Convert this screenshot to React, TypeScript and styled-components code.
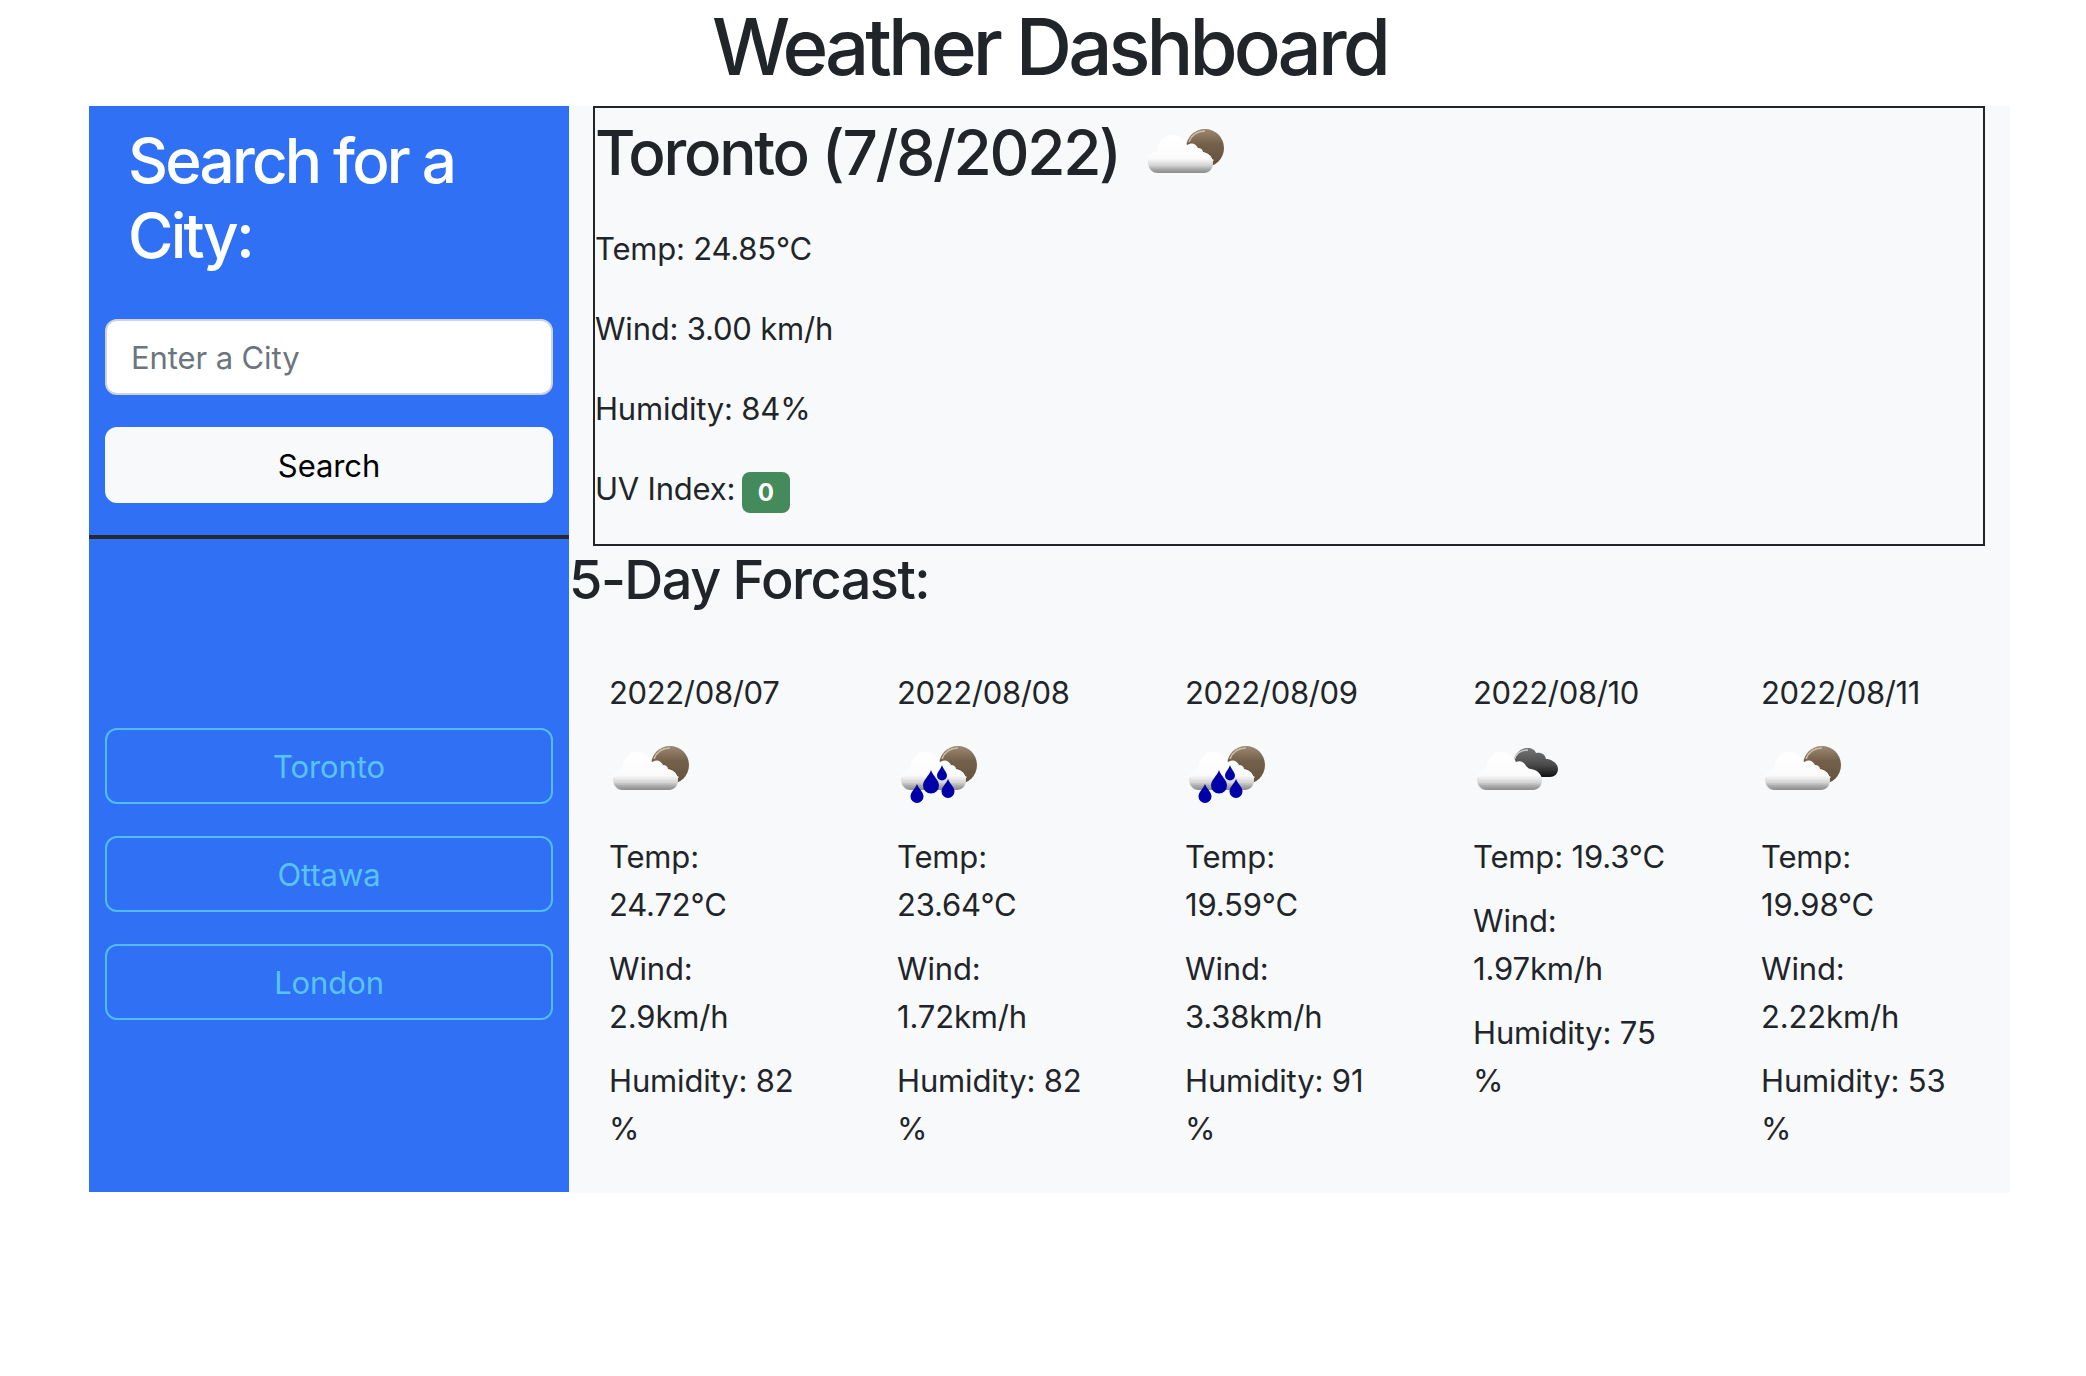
import React from "react";
import styled, { createGlobalStyle } from "styled-components";

const Global = createGlobalStyle`
  html, body { margin: 0; padding: 0; background: #fff; }
  body { font-family: Inter, "Liberation Sans", sans-serif; color: #212529; font-size: 31px; line-height: 48px; }
  * { box-sizing: border-box; }
`;

const Page = styled.div`
  width: 1921px;
  margin-left: 89px;
  height: 1376px;
`;
const Title = styled.h1`
  margin: 0 0 13px;
  height: 93px;
  font-size: 78px;
  font-weight: 550;
  line-height: 93px;
  text-align: center;
  letter-spacing: -3.97px;
`;
const Layout = styled.div`
  display: grid;
  grid-template-columns: 480px 1441px;
`;
const Sidebar = styled.aside`
  background: #3070f5;
  height: 1086px;
  padding: 17px 16px 0 16px;
`;
const SearchTitle = styled.h2`
  margin: 0 0 46px;
  padding: 0 40px 0 23px;
  font-size: 62px;
  font-weight: 550;
  line-height: 75px;
  color: #fff;
  letter-spacing: -2.8px;
`;
const CityInput = styled.input`
  display: block;
  width: 100%;
  height: 76px;
  margin-bottom: 32px;
  padding: 0 24px;
  border: 2px solid #ced4da;
  border-radius: 12px;
  background: #fff;
  font: 400 31px Inter, sans-serif;
  letter-spacing: -0.1px;
  color: #212529;
  &::placeholder { color: #6c757d; opacity: 1; }
`;
const Btn = styled.button<{ $outline?: boolean }>`
  display: block;
  width: 100%;
  height: 76px;
  padding: 0;
  border: 2px solid ${(p) => (p.$outline ? "#52bdf4" : "#f8f9fa")};
  border-radius: 12px;
  background: ${(p) => (p.$outline ? "transparent" : "#f8f9fa")};
  color: ${(p) => (p.$outline ? "#58c4f6" : "#000")};
  font: 400 31px Inter, sans-serif;
  letter-spacing: -0.1px;
`;
const Rule = styled.hr`
  margin: 32px -16px 189px -16px;
  border: 0;
  height: 4px;
  background: #262a2e;
`;
const CityList = styled.div`
  display: flex;
  flex-direction: column;
  gap: 32px;
`;
const Main = styled.main`
  background: #f8f9fa;
`;
const Current = styled.section`
  height: 440px;
  margin: 0 25px 0 24px;
  padding: 6px 0 0;
  border: 2px solid #212529;
`;
const CurrentHead = styled.div`
  display: flex;
  align-items: center;
  height: 77px;
  margin-bottom: 34px;
`;
const CityName = styled.h2`
  margin: 0;
  font-size: 62px;
  font-weight: 550;
  line-height: 77px;
  letter-spacing: -2.28px;
`;
const HeadIcon = styled.span`
  display: block;
  height: 100px;
  margin: -5px 0 0 24px;
`;
const Stat = styled.p`
  margin: 0 0 32px;
  font-size: 31px;
  line-height: 48px;
  letter-spacing: -0.2px;
  white-space: nowrap;
`;
const Badge = styled.span`
  display: inline-block;
  margin-left: -2px;
  width: 48px;
  height: 41px;
  border-radius: 8px;
  background: #458a5a;
  color: #fff;
  font-size: 24px;
  font-weight: 700;
  line-height: 41px;
  text-align: center;
  vertical-align: -1px;
`;
const ForecastTitle = styled.h3`
  margin: 1px 0 32px 0;
  font-size: 54px;
  font-weight: 550;
  line-height: 66px;
  letter-spacing: -1.5px;
`;
const Cards = styled.div`
  display: grid;
  grid-template-columns: repeat(5, 288px);
`;
const Card = styled.article`
  padding: 24px 48px 24px 40px;
`;
const CardDate = styled.div`
  font-size: 31px;
  line-height: 48px;
  letter-spacing: -0.35px;
`;
const CardIcon = styled.div`
  height: 100px;
  margin-bottom: 16px;
`;
const CardStat = styled.p`
  margin: 0 0 16px;
  font-size: 31px;
  line-height: 48px;
  letter-spacing: -0.15px;
`;

type Kind = "sun" | "rain" | "dark";

const CLOUD =
  "M14 73 C7.5 73 4 68 4 62 C4 56.5 8 52.5 13 51.5 C14 42 20 35 28 35 C35 35 40 39 43 45 C47 43 51 45 53 49 C55 51 56 52 58 52 C64 53 69 57 69 63 C69 69 65 73 60 73 Z";

function WeatherIcon({ kind }: { kind: Kind }) {
  return (
    <svg width="100" height="100" viewBox="0 0 100 100" aria-hidden="true">
      <defs>
        <linearGradient id={`cl-${kind}`} x1="0" y1="35" x2="0" y2="73" gradientUnits="userSpaceOnUse">
          <stop offset="0" stopColor="#ffffff" />
          <stop offset="0.62" stopColor="#fbfbfb" />
          <stop offset="0.8" stopColor="#d4d4d4" />
          <stop offset="0.9" stopColor="#a8a8a8" />
          <stop offset="1" stopColor="#8c8c8c" />
        </linearGradient>
        <linearGradient id={`sn-${kind}`} x1="0" y1="28" x2="0" y2="68" gradientUnits="userSpaceOnUse">
          <stop offset="0" stopColor="#a08a72" />
          <stop offset="0.4" stopColor="#74604a" />
          <stop offset="1" stopColor="#62503c" />
        </linearGradient>
        <linearGradient id={`dk-${kind}`} x1="0" y1="30" x2="0" y2="60" gradientUnits="userSpaceOnUse">
          <stop offset="0" stopColor="#777" />
          <stop offset="0.6" stopColor="#4a4a4a" />
          <stop offset="1" stopColor="#111" />
        </linearGradient>
        <filter id={`bl-${kind}`} x="-10%" y="-10%" width="120%" height="120%">
          <feGaussianBlur stdDeviation="0.55" />
        </filter>
      </defs>
      <g filter={`url(#bl-${kind})`}>
        {kind !== "dark" && (
          <>
            <circle cx="61" cy="48" r="19" fill={`url(#sn-${kind})`} />
            <path d="M45 42 C48 34 54 31 61 31" fill="none" stroke="#cdbfae" strokeWidth="1.4" />
            <path d="M44 45 C48 42 52 44 54 48 C57 48 59 50 59 52 C63 53 67 55 68 59 L70 60 L60 70 L30 60 Z" fill="#f8f9fa" />
          </>
        )}
        {kind === "dark" && (
          <>
            <path
              d="M40 45 C42 36 48 31 54 31 C59 31 62 33 63 36 C68 35 72 37 73 42 C78 42 85 46 85 52 C85 57 81 60 77 60 L58 60 L50 50 Z"
              fill={`url(#dk-${kind})`}
            />
            <path d="M41 43 C43 36 48 33 55 33" fill="none" stroke="#d0d0d0" strokeWidth="1.4" />
          </>
        )}
        <path d={CLOUD} fill={`url(#cl-${kind})`} />
        {kind === "rain" && (
          <>
            <path d="M20 67 C22 72 26.5 75 26.5 79.5 A6.5 6.5 0 0 1 13.5 79.5 C13.5 75 18 72 20 67 Z" fill="#0606a8" />
            <path d="M34 53 C36 59 42 63 42 68.5 A8 8 0 0 1 26 68.5 C26 63 32 59 34 53 Z" fill="#0606a8" />
            <path d="M45 48 C46 52 50 55 50 58.5 A5 5 0 0 1 40 58.5 C40 55 44 52 45 48 Z" fill="#0606a8" />
            <path d="M51 62 C53 67 57.5 70 57.5 74.5 A6.5 6.5 0 0 1 44.5 74.5 C44.5 70 49 67 51 62 Z" fill="#0606a8" />
          </>
        )}
      </g>
    </svg>
  );
}

const FORECAST: { date: string; kind: Kind; temp: string; wind: string; humidity: string }[] = [
  { date: "2022/08/07", kind: "sun", temp: "24.72", wind: "2.9", humidity: "82" },
  { date: "2022/08/08", kind: "rain", temp: "23.64", wind: "1.72", humidity: "82" },
  { date: "2022/08/09", kind: "rain", temp: "19.59", wind: "3.38", humidity: "91" },
  { date: "2022/08/10", kind: "dark", temp: "19.3", wind: "1.97", humidity: "75" },
  { date: "2022/08/11", kind: "sun", temp: "19.98", wind: "2.22", humidity: "53" },
];

export default function App() {
  return (
    <Page>
      <Global />
      <Title>Weather Dashboard</Title>
      <Layout>
        <Sidebar>
          <SearchTitle>Search for a City:</SearchTitle>
          <CityInput placeholder="Enter a City" />
          <Btn>Search</Btn>
          <Rule />
          <CityList>
            {["Toronto", "Ottawa", "London"].map((c) => (
              <Btn $outline key={c}>{c}</Btn>
            ))}
          </CityList>
        </Sidebar>
        <Main>
          <Current>
            <CurrentHead>
              <CityName>Toronto (7/8/2022)</CityName>
              <HeadIcon><WeatherIcon kind="sun" /></HeadIcon>
            </CurrentHead>
            <Stat>Temp: 24.85°C</Stat>
            <Stat>Wind: 3.00 km/h</Stat>
            <Stat>Humidity: 84%</Stat>
            <Stat>UV Index: <Badge>0</Badge></Stat>
          </Current>
          <ForecastTitle>5-Day Forcast:</ForecastTitle>
          <Cards>
            {FORECAST.map((f) => (
              <Card key={f.date}>
                <CardDate>{f.date}</CardDate>
                <CardIcon><WeatherIcon kind={f.kind} /></CardIcon>
                <CardStat>Temp: {f.temp}°C</CardStat>
                <CardStat>Wind: {f.wind}km/h</CardStat>
                <CardStat>Humidity: {f.humidity} %</CardStat>
              </Card>
            ))}
          </Cards>
        </Main>
      </Layout>
    </Page>
  );
}
